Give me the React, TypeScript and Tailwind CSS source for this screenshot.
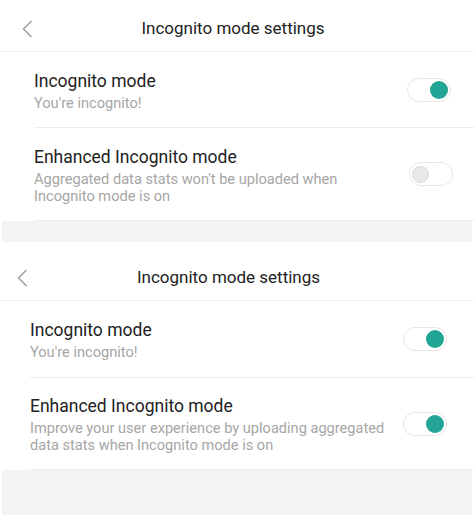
import React from "react";

interface RowProps {
  title: string;
  subtitle: string;
  on: boolean;
}

const Toggle = ({ on }: { on: boolean }) => (
  <div
    className={`flex h-[24px] w-[44px] shrink-0 items-center rounded-full border border-[#e6e6e6] bg-white px-[2px] ${
      on ? "justify-end" : "justify-start"
    }`}
  >
    {on ? (
      <div className="h-[18px] w-[18px] rounded-full bg-[#22a595]" />
    ) : (
      <div className="h-[17px] w-[17px] rounded-full border border-[#d8d8d8] bg-[#e8e8e8]" />
    )}
  </div>
);

const Row = ({ title, subtitle, on }: RowProps) => (
  <div className="flex items-center justify-between gap-4">
    <div className="flex flex-col pt-[2px]">
      <span className="text-[17.5px] leading-[22px] text-[#222]">{title}</span>
      <span className="mt-[3px] whitespace-pre-line text-[14.6px] leading-[17px] text-[#a6a6a6]">
        {subtitle}
      </span>
    </div>
    <Toggle on={on} />
  </div>
);

const Chevron = () => (
  <svg width="11" height="18" viewBox="0 0 11 18" fill="none">
    <path d="M9.5 1 L1.5 9 L9.5 17" stroke="#9a9a9a" strokeWidth="1.4" />
  </svg>
);

export default function App() {
  return (
    <div
      className="min-h-[516px] w-[474px] bg-white"
      style={{ fontFamily: "Roboto, 'Noto Sans', sans-serif" }}
    >
      {/* Top screenshot */}
      <div className="flex flex-col">
        <div className="grid h-[52px] grid-cols-[1fr_auto_1fr] items-center border-b border-[#f0f0f0] pt-[6px] pl-[22px] pr-[30px]">
          <Chevron />
          <span className="text-[17px] text-[#222]">Incognito mode settings</span>
          <span />
        </div>
        <div className="pl-[34px]">
          <div className="flex h-[76px] items-center border-b border-[#ececec] pr-[23px] pt-[1px]">
            <div className="flex-1">
              <Row title="Incognito mode" subtitle="You're incognito!" on />
            </div>
          </div>
          <div className="flex h-[93px] items-center border-b border-[#ececec] pr-[21px]">
            <div className="flex-1">
              <Row
                title="Enhanced Incognito mode"
                subtitle={
                  "Aggregated data stats won't be uploaded when\nIncognito mode is on"
                }
                on={false}
              />
            </div>
          </div>
        </div>
        <div className="mx-[2px] h-[21px] bg-[#f4f4f4]" />
      </div>

      {/* Bottom screenshot */}
      <div className="flex flex-col">
        <div className="grid h-[59px] grid-cols-[1fr_auto_1fr] items-center border-b border-[#f0f0f0] pt-[13px] pl-[17px] pr-[34px]">
          <Chevron />
          <span className="text-[17px] text-[#222]">Incognito mode settings</span>
          <span />
        </div>
        <div className="pl-[30px]">
          <div className="flex h-[77px] items-center border-b border-[#ececec] pr-[27px]">
            <div className="flex-1">
              <Row title="Incognito mode" subtitle="You're incognito!" on />
            </div>
          </div>
          <div className="flex h-[92px] items-center border-b border-[#ececec] pr-[27px]">
            <div className="flex-1">
              <Row
                title="Enhanced Incognito mode"
                subtitle={
                  "Improve your user experience by uploading aggregated\ndata stats when Incognito mode is on"
                }
                on
              />
            </div>
          </div>
        </div>
        <div className="mx-[2px] h-[45px] bg-[#f4f4f4]" />
      </div>
    </div>
  );
}
